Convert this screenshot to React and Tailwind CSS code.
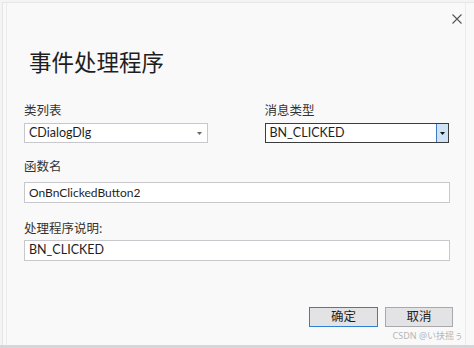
export default function App() {
  const font = { fontFamily: '"Noto Sans", "Noto Sans CJK SC", sans-serif' };
  const latin = { fontFamily: 'Lato, "Noto Sans CJK SC", sans-serif' };
  return (
    <div className="w-[474px] h-[348px] bg-[#f4f4f5] flex flex-col overflow-hidden" style={font}>
      <div className="flex-1 pt-[2px] pl-[2px] flex">
        <div className="flex-1 border-t border-l border-[#e6e6e8] bg-[#f9f9fa] pl-[3px] flex">
          <div className="flex-1 border-l border-[#ececee] flex">
            <div className="w-[459px] border-r border-[#ececee] relative flex flex-col pl-[17px] pr-[16px]">
              <div className="absolute right-[3px] top-[11px]">
                <svg width="10" height="10" viewBox="0 0 10 10">
                  <path d="M0.5 0.5 L9.5 9.5 M9.5 0.5 L0.5 9.5" stroke="#555" strokeWidth="1.1" />
                </svg>
              </div>
              <div className="pt-[45px] pl-[5px] text-[22.5px] leading-[30px] text-[#1e1e1e]">事件处理程序</div>
              <div className="mt-[25px] flex gap-[57px]">
                <div className="w-[184px]">
                  <div className="text-[12.5px] leading-[16px] text-[#333]">类列表</div>
                  <div className="mt-[4px] h-[20px] border border-[#c8c8cc] bg-white flex items-center pl-[4px] pr-[5px]">
                    <span className="flex-1 text-[12.5px] text-[#1e1e1e]" style={latin}>CDialogDlg</span>
                    <svg width="5" height="3" viewBox="0 0 5 3"><path d="M0 0 L5 0 L2.5 3 Z" fill="#666" /></svg>
                  </div>
                </div>
                <div className="w-[185px]">
                  <div className="text-[12.5px] leading-[16px] text-[#333]">消息类型</div>
                  <div className="mt-[4px] h-[20px] border border-[#3c3c3c] bg-white flex items-stretch pl-[4px]">
                    <span className="flex-1 text-[12.5px] text-[#1e1e1e] flex items-center" style={latin}>BN_CLICKED</span>
                    <div className="w-[12px] bg-[#cfe3f6] border-l border-[#3d7cc9] flex items-center justify-center">
                      <svg width="5" height="3" viewBox="0 0 5 3"><path d="M0 0 L5 0 L2.5 3 Z" fill="#111" /></svg>
                    </div>
                  </div>
                </div>
              </div>
              <div className="mt-[16px] text-[12.5px] leading-[16px] text-[#333]">函数名</div>
              <div className="mt-[7px] w-[426px] h-[21px] border border-[#c8c8cc] bg-white flex items-center pl-[4px] text-[12px] text-[#1e1e1e]" style={latin}>OnBnClickedButton2</div>
              <div className="mt-[18px] text-[12.5px] leading-[16px] text-[#333]">处理程序说明:</div>
              <div className="mt-[3px] w-[426px] h-[21px] border border-[#c8c8cc] bg-white flex items-center pl-[4px] text-[12.5px] text-[#1e1e1e]" style={latin}>BN_CLICKED</div>
              <div className="mt-[46px] flex justify-end gap-[7px] mr-[-4px]">
                <div className="w-[69px] h-[20px] border border-[#2f7fd4] bg-[#e3e3e5] flex items-center justify-center text-[12.5px] text-[#1e1e1e]">确定</div>
                <div className="w-[68px] h-[20px] border border-[#a9a9ad] bg-[#e3e3e5] flex items-center justify-center text-[12.5px] text-[#1e1e1e]">取消</div>
              </div>
              <div className="absolute right-[2px] bottom-[4px] text-[9px] leading-[10px] text-[#b5b5b8]">CSDN @い扶摇ぅ</div>
            </div>
          </div>
        </div>
      </div>
      <div className="h-[3px] bg-[#d6d6d8]" />
    </div>
  );
}
